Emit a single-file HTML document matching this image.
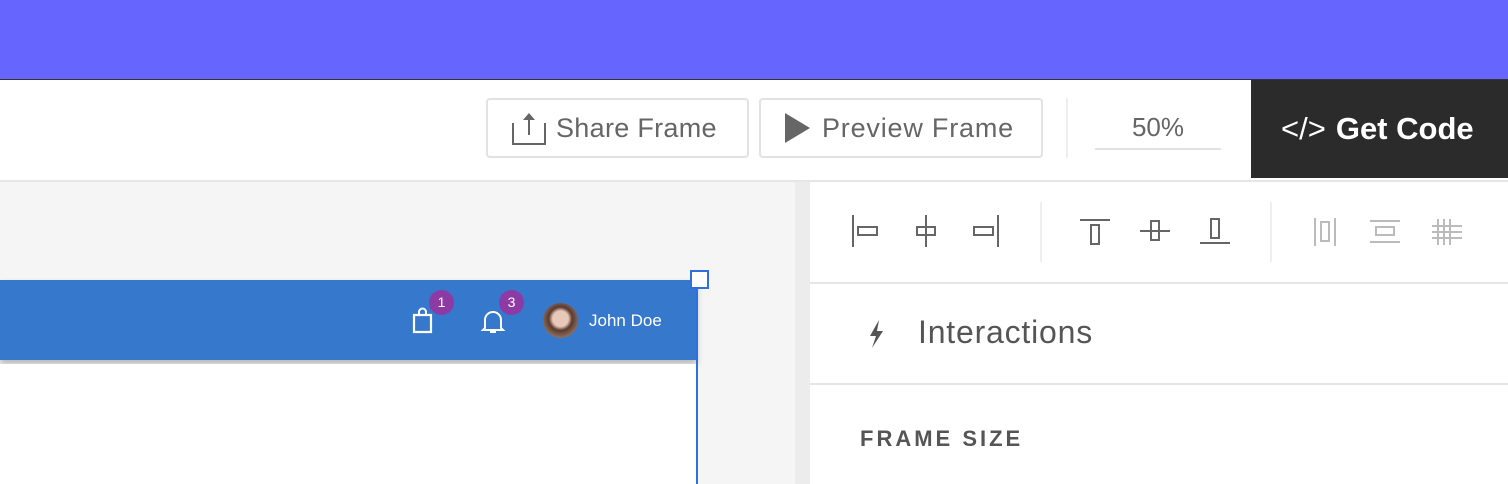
<!DOCTYPE html>
<html><head><style>
*{margin:0;padding:0;box-sizing:border-box}
body{width:1508px;height:484px;overflow:hidden;position:relative;background:#fff;font-family:"Liberation Sans",sans-serif}
.a{position:absolute}
.btn{position:absolute;top:98px;height:60px;border:2px solid #e2e2e2;border-radius:4px;background:#fff;color:#666;font-size:27px;display:flex;align-items:center;letter-spacing:0.3px}
</style></head><body>
<div class="a" style="left:0;top:0;width:1508px;height:79px;background:#6666ff"></div>
<div class="a" style="left:0;top:79px;width:1508px;height:1px;background:#333"></div>
<div class="btn" style="left:486px;width:263px"><svg width="40" height="40" style="margin-left:22px" viewBox="0 0 40 40"><path d="M3 15v21h32V15" fill="none" stroke="#666" stroke-width="2"/><path d="M19 27V6" stroke="#666" stroke-width="2"/><path d="M13 12l6-7 6 7z" fill="#666"/></svg><span style="margin-left:6px">Share Frame</span></div>
<div class="btn" style="left:759px;width:284px"><svg width="30" height="32" style="margin-left:22px" viewBox="0 0 30 32"><path d="M2 1l25 15L2 31z" fill="#666"/></svg><span style="margin-left:9px;letter-spacing:0.8px">Preview Frame</span></div>
<div class="a" style="left:1066px;top:98px;width:2px;height:60px;background:#eee"></div>
<div class="a" style="left:1095px;top:112px;width:126px;text-align:center;font-size:26px;color:#666">50%</div>
<div class="a" style="left:1095px;top:148px;width:126px;height:2px;background:#e2e2e2"></div>
<div class="a" style="left:1251px;top:80px;width:257px;height:98px;background:#2b2b2b;color:#fff;font-size:31px;font-weight:bold;display:flex;align-items:center"><span style="margin-left:30px;font-weight:normal">&lt;/&gt;</span><span style="margin-left:10px">Get Code</span></div>
<div class="a" style="left:0;top:180px;width:1508px;height:2px;background:#e6e6e6"></div>
<div class="a" style="left:0;top:182px;width:795px;height:302px;background:#f5f5f5"></div>
<div class="a" style="left:795px;top:182px;width:15px;height:302px;background:#ececec"></div>
<div class="a" style="left:0;top:280px;width:697px;height:80px;background:#3578cc;box-shadow:0 4px 6px rgba(0,0,0,.25)"></div>
<div class="a" style="left:0;top:364px;width:696px;height:120px;background:#fff"></div>
<div class="a" style="left:696px;top:280px;width:2px;height:204px;background:#2f6fe0"></div>
<div class="a" style="left:690px;top:270px;width:19px;height:19px;background:#fff;border:2px solid #2f6fe0"></div>
<svg class="a" style="left:410px;top:306px" width="26" height="30" viewBox="0 0 26 30"><path d="M4 9h17v17H4z" fill="none" stroke="#fff" stroke-width="2.2"/><path d="M9 9V6a3.5 3.5 0 017 0v3" fill="none" stroke="#fff" stroke-width="2"/></svg>
<div class="a" style="left:429px;top:290px;width:25px;height:25px;border-radius:50%;background:#8e3aa5;color:#fff;font-size:14px;text-align:center;line-height:25px">1</div>
<svg class="a" style="left:480px;top:306px" width="26" height="30" viewBox="0 0 26 30"><path d="M5 22V14a8 8 0 0116 0v8l2 2H3z" fill="none" stroke="#fff" stroke-width="2"/><path d="M10 26h6" stroke="#fff" stroke-width="2"/></svg>
<div class="a" style="left:499px;top:290px;width:25px;height:25px;border-radius:50%;background:#8e3aa5;color:#fff;font-size:14px;text-align:center;line-height:25px">3</div>
<div class="a" style="left:543px;top:303px;width:35px;height:35px;border-radius:50%;background:radial-gradient(circle at 50% 45%,#e8c8b8 0 30%,#5a3a2e 45%,#8a6a5a 70%,#a0c0c8)"></div>
<div class="a" style="left:589px;top:311px;color:#fff;font-size:17px">John Doe</div>
<div class="a" style="left:810px;top:282px;width:698px;height:2px;background:#e6e6e6"></div>
<div class="a" style="left:810px;top:383px;width:698px;height:2px;background:#e6e6e6"></div>
<div class="a" style="left:1040px;top:202px;width:2px;height:60px;background:#eee"></div>
<div class="a" style="left:1270px;top:202px;width:2px;height:60px;background:#eee"></div>
<svg class="a" style="left:840px;top:210px" width="630" height="45" viewBox="840 210 630 45" fill="none" stroke-width="2">
<g stroke="#666">
<path d="M853 215v32"/><rect x="858" y="227" width="19" height="8"/>
<path d="M926 215v32"/><rect x="917" y="227" width="18" height="8"/>
<path d="M998 215v32"/><rect x="974" y="227" width="19" height="8"/>
<path d="M1080 220h30"/><rect x="1091" y="225" width="8" height="19"/>
<path d="M1140 231h30"/><rect x="1151" y="221" width="8" height="19"/>
<path d="M1200 243h30"/><rect x="1211" y="219" width="8" height="19"/>
</g>
<g stroke="#bbb">
<path d="M1315 218v28M1335 218v28"/><rect x="1321" y="222" width="8" height="19"/>
<path d="M1370 221h30M1370 242h30"/><rect x="1376" y="227" width="18" height="8"/>
<path d="M1432 226h30M1432 232h30M1432 238h30M1438 219v26M1444 219v26M1450 219v26"/>
</g></svg>
<svg class="a" style="left:868px;top:319px" width="20" height="30" viewBox="0 0 20 30"><path d="M11 1L2 17h6l-4 12 11-17H9z" fill="#555"/></svg>
<div class="a" style="left:918px;top:314px;font-size:32px;color:#555;letter-spacing:0.8px">Interactions</div>
<div class="a" style="left:860px;top:426px;font-size:22px;font-weight:bold;color:#555;letter-spacing:3px">FRAME SIZE</div>
</body></html>
